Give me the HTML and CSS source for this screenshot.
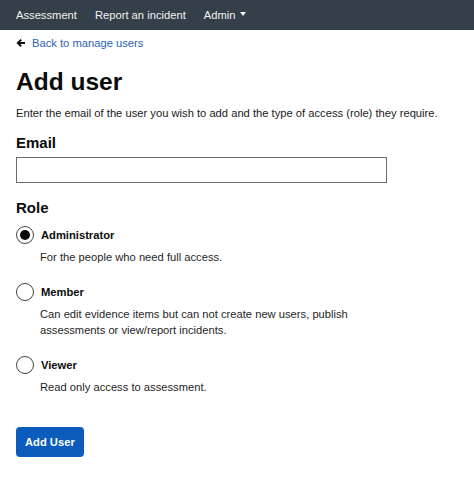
FILE: index.html
```html
<!DOCTYPE html>
<html lang="en">
<head>
<meta charset="utf-8">
<title>Add user</title>
<link rel="stylesheet" href="styles.css">
</head>
<body>
<nav class="navbar">
  <a class="nav-link" href="#">Assessment</a>
  <a class="nav-link" href="#">Report an incident</a>
  <a class="nav-link dropdown" href="#">Admin <span class="caret"></span></a>
</nav>
<main class="page">
  <a class="back-link" href="#">
    <svg class="back-arrow" viewBox="0 0 10 10" width="10" height="10" aria-hidden="true">
      <path d="M9 5H2.2M5.2 1.6L1.8 5l3.4 3.4" fill="none" stroke="#0b0c0c" stroke-width="1.9"/>
    </svg>
    <span>Back to manage users</span>
  </a>
  <h1 class="title">Add user</h1>
  <p class="intro">Enter the email of the user you wish to add and the type of access (role) they require.</p>

  <label class="field-label" for="email">Email</label>
  <input class="text-input" id="email" type="text">

  <div class="field-label role-label">Role</div>

  <div class="options">
    <div class="option">
      <div class="option-row">
        <span class="radio checked"></span>
        <span class="option-label">Administrator</span>
      </div>
      <div class="hint">For the people who need full access.</div>
    </div>
    <div class="option">
      <div class="option-row">
        <span class="radio"></span>
        <span class="option-label">Member</span>
      </div>
      <div class="hint">Can edit evidence items but can not create new users, publish<br>assessments or view/report incidents.</div>
    </div>
    <div class="option">
      <div class="option-row">
        <span class="radio"></span>
        <span class="option-label">Viewer</span>
      </div>
      <div class="hint">Read only access to assessment.</div>
    </div>
  </div>

  <button class="btn-primary" type="button">Add User</button>
</main>
</body>
</html>
```

FILE: styles.css
```css
* { box-sizing: border-box; }

body {
  margin: 0;
  font-family: "Liberation Sans", Arial, sans-serif;
  font-size: 11.2px;
  color: #0b0c0c;
  background: #fff;
}

.navbar {
  height: 30px;
  background: #343f49;
  display: flex;
  align-items: center;
  gap: 18px;
  padding: 0 16px;
}

.nav-link {
  color: #f2f2f2;
  text-decoration: none;
  font-size: 11.2px;
  line-height: 16px;
}

.dropdown {
  display: flex;
  align-items: center;
  gap: 5px;
}

.caret {
  width: 0;
  height: 0;
  border-left: 3.5px solid transparent;
  border-right: 3.5px solid transparent;
  border-top: 4px solid #f2f2f2;
  margin-top: -2px;
}

.page {
  padding: 0 16px;
}

.back-link {
  display: flex;
  align-items: center;
  gap: 6px;
  margin-top: 5px;
  height: 16px;
  color: #2a62b2;
  text-decoration: none;
  line-height: 16px;
}

.back-arrow { flex: none; }

.title {
  margin: 16px 0 0;
  font-size: 24.5px;
  line-height: 30px;
  font-weight: bold;
}

.intro {
  margin: 8px 0 0;
  line-height: 16px;
  color: #1a1a1a;
}

.field-label {
  display: block;
  margin-top: 12px;
  font-size: 15px;
  font-weight: bold;
  line-height: 20px;
}

.text-input {
  display: block;
  margin-top: 4px;
  width: 371px;
  height: 26px;
  border: 1.5px solid #6b6b6b;
  border-radius: 0;
  background: #fff;
  padding: 0 6px;
  font: inherit;
}

.role-label {
  margin-top: 15px;
}

.options {
  display: flex;
  flex-direction: column;
  gap: 18px;
  margin-top: 8px;
}

.option-row {
  display: flex;
  align-items: center;
  gap: 7px;
  height: 18px;
}

.radio {
  flex: none;
  width: 18px;
  height: 18px;
  border: 1.5px solid #444;
  border-radius: 50%;
  display: flex;
  align-items: center;
  justify-content: center;
}

.radio.checked::after {
  content: "";
  width: 10px;
  height: 10px;
  border-radius: 50%;
  background: #0b0c0c;
}

.option-label {
  font-weight: bold;
  line-height: 16px;
}

.hint {
  margin: 5px 0 0 24px;
  line-height: 16px;
  color: #1f1f1f;
}

.btn-primary {
  display: block;
  margin-top: 32px;
  height: 30px;
  padding: 0 9px;
  border: 0;
  border-radius: 4px;
  background: #0b5cbd;
  color: #fff;
  font-family: inherit;
  font-size: 11.2px;
  font-weight: bold;
}
```
